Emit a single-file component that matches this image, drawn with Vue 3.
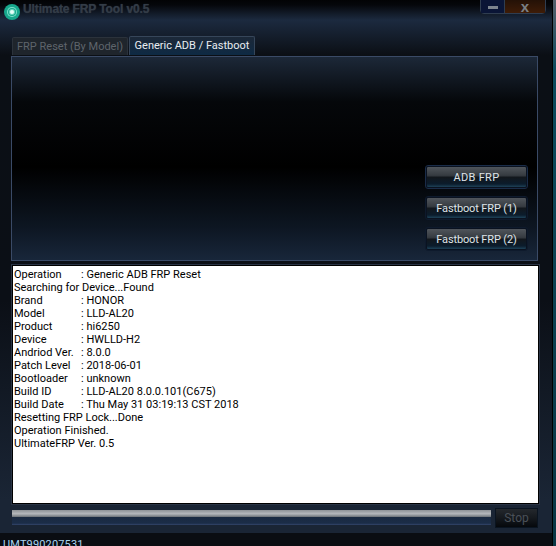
<script setup>
const logLines = [
  ['Operation', ': Generic ADB FRP Reset'],
  ['Searching for Device...Found'],
  ['Brand', ': HONOR'],
  ['Model', ': LLD-AL20'],
  ['Product', ': hi6250'],
  ['Device', ': HWLLD-H2'],
  ['Andriod Ver.', ': 8.0.0'],
  ['Patch Level', ': 2018-06-01'],
  ['Bootloader', ': unknown'],
  ['Build ID', ': LLD-AL20 8.0.0.101(C675)'],
  ['Build Date', ': Thu May 31 03:19:13 CST 2018'],
  ['Resetting FRP Lock...Done'],
  ['Operation Finished.'],
  ['UltimateFRP Ver. 0.5'],
]
const actions = ['ADB FRP', 'Fastboot FRP (1)', 'Fastboot FRP (2)']
</script>

<template>
  <div class="window">
    <div class="main">
      <header class="titlebar">
        <span class="logo"><span class="logo-core"></span></span>
        <span class="title">Ultimate FRP Tool v0.5</span>
        <div class="controls">
          <span class="ctl min"><i></i></span>
          <span class="ctl close">x</span>
        </div>
      </header>
      <div class="tabs">
        <span class="tab">FRP Reset (By Model)</span>
        <span class="tab active">Generic ADB / Fastboot</span>
      </div>
      <section class="panel">
        <button v-for="a in actions" :key="a" class="action">{{ a }}</button>
      </section>
      <section class="log">
        <div v-for="(l, i) in logLines" :key="i" class="line">
          <span v-if="l.length === 2" class="key">{{ l[0] }}</span><span>{{ l[l.length - 1] }}</span>
        </div>
      </section>
      <div class="progress-row">
        <div class="progress"></div>
        <span class="stop">Stop</span>
      </div>
      <footer class="status">UMT990207531</footer>
    </div>
    <div class="edge"></div>
  </div>
</template>

<style>
html, body { margin: 0; background: #000; }
</style>

<style scoped>
.window {
  width: 556px;
  height: 546px;
  display: flex;
  overflow: hidden;
  font-family: Roboto, "Liberation Sans", sans-serif;
  font-size: 11px;
}
.main {
  width: 552px;
  display: flex;
  flex-direction: column;
  background: linear-gradient(180deg, #020305 0, #05070b 5px, #1c2a3f 20px, #0b0f15 55px, #0b0f16 300px, #1a2535 500px, #1a2535 533px);
}
.edge {
  flex: 1;
  background: linear-gradient(180deg, #55606c 0, #0c4a5c 70px, #0a3644 100%);
  border-left: 1px solid #000;
}
.titlebar {
  height: 36px;
  display: flex;
  align-items: flex-start;
  position: relative;
}
.logo {
  width: 16px;
  height: 16px;
  margin: 4px 0 0 4px;
  border-radius: 50%;
  background: #17a78c;
  display: flex;
  align-items: center;
  justify-content: center;
}
.logo-core {
  width: 4px;
  height: 4px;
  border-radius: 50%;
  background: #e6fff8;
  box-shadow: 0 0 0 1px #6fd8c0, 0 0 0 2px #17a78c, 0 0 0 3px #7fe0cb;
}
.title {
  margin: 0 0 0 3px;
  font-size: 12px;
  font-weight: 700;
  letter-spacing: -0.12px;
  line-height: 18px;
  color: #333c47;
  text-shadow: 0 0 1px #2c3540;
  font-family: "Liberation Sans", sans-serif;
}
.controls {
  position: absolute;
  top: -4px;
  right: 6px;
  display: flex;
  height: 16px;
  border: 1px solid #2f3d50;
  border-radius: 0 0 4px 4px;
}
.ctl {
  display: flex;
  align-items: center;
  justify-content: center;
  height: 100%;
}
.min {
  width: 23px;
  background: #0a1536;
  border-right: 1px solid #2f3d50;
}
.min i {
  display: block;
  width: 10px;
  height: 3px;
  margin-top: 4px;
  background: #7d858f;
}
.close {
  width: 40px;
  background: linear-gradient(180deg, #1e0f06, #3e1c07);
  color: #7b8085;
  font: 700 15px/12px "Liberation Sans", sans-serif;
  padding-top: 3px;
  box-sizing: border-box;
}
.tabs {
  height: 19px;
  display: flex;
  padding-left: 12px;
  gap: 1px;
}
.tab {
  margin-top: 1px;
  width: 116px;
  box-sizing: border-box;
  text-align: center;
  line-height: 18px;
  color: #5e646b;
  font-size: 11px;
  background: #1f252c;
  border: 1px solid #2b323b;
  border-bottom: 0;
  border-radius: 2px 2px 0 0;
}
.tab.active {
  margin-top: 0;
  width: 126px;
  color: #e8ecf0;
  background: linear-gradient(180deg, #1c2838, #0e2a44);
  border-color: #36465a;
}
.panel {
  margin: 1px 0 0 11px;
  width: 527px;
  height: 205px;
  box-sizing: border-box;
  border: 1px solid #3a4a66;
  background: linear-gradient(180deg, #1c2838 0, #05070a 45px, #000 110px, #0d1622 170px, #18263a 100%);
  display: flex;
  flex-direction: column;
  align-items: flex-end;
  justify-content: flex-end;
  gap: 9px;
  padding: 0 10px 10px 0;
}
.action {
  width: 101px;
  height: 22px;
  padding: 0;
  font: inherit;
  font-size: 11px;
  letter-spacing: -0.13px;
  color: #dfe4e8;
  border: 1px solid #0a1220;
  border-radius: 2px;
  outline: 1px solid #0e1a2c;
  background: linear-gradient(180deg, #50555b 0, #363b41 42%, #12171d 52%, #0b1c2c 85%, #1e4258 100%);
}
.action:first-child {
  letter-spacing: 0.3px;
  outline-color: #1a2c48;
}
.log {
  margin: 4px 0 0 12px;
  width: 527px;
  height: 239px;
  box-sizing: border-box;
  background: #fff;
  border: 1px solid #000;
  outline: 1px solid #2a3445;
  padding: 2px 1px;
  color: #000;
  font-size: 11px;
  line-height: 13px;
}
.line {
  height: 13px;
  white-space: nowrap;
}
.key {
  display: inline-block;
  width: 67px;
}
.progress-row {
  display: flex;
  margin: 4px 0 0 12px;
  height: 20px;
  gap: 4px;
}
.progress {
  width: 479px;
  height: 15px;
  margin-top: 2px;
  background: linear-gradient(180deg, #8d9195 0, #b5b8bb 25%, #6d7378 46%, #1a2a40 48%, #1b2d48 88%, #34466c 100%);
}
.stop {
  width: 43px;
  height: 20px;
  box-sizing: border-box;
  line-height: 18px;
  text-align: center;
  color: #4a5058;
  font-size: 12px;
  background: linear-gradient(180deg, #24282d, #15191e 50%, #05080c);
  border: 1px solid #0a1420;
}
.status {
  margin-top: auto;
  height: 13px;
  box-sizing: border-box;
  overflow: hidden;
  background: #0a0d12;
  padding: 5px 0 0 3px;
  color: #a8d4f0;
  font-size: 11px;
  letter-spacing: 0.15px;
  line-height: 13px;
}
</style>
